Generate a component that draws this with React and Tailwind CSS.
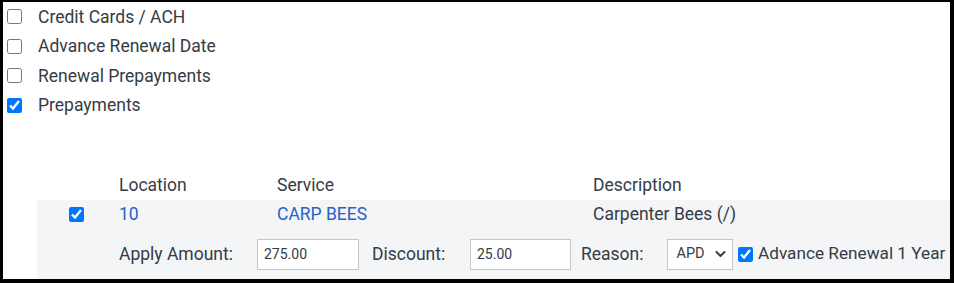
import React from 'react';

const options = [
  { label: 'Credit Cards / ACH', checked: false },
  { label: 'Advance Renewal Date', checked: false },
  { label: 'Renewal Prepayments', checked: false },
  { label: 'Prepayments', checked: true },
];

function Check({ checked }) {
  return (
    <input
      type="checkbox"
      defaultChecked={checked}
      className="m-0 h-[15px] w-[15px] shrink-0 accent-[#0075ff]"
    />
  );
}

export default function App() {
  return (
    <div
      className="h-[283px] w-[954px] overflow-hidden border-b-4 border-l-[3px] border-r-4 border-t-2 border-black bg-white text-[17.5px] text-[#353c45]"
      style={{ fontFamily: 'Roboto, "Liberation Sans", sans-serif' }}
    >
      {/* option list */}
      <div className="flex flex-col">
        {options.map(o => (
          <label key={o.label} className="flex h-[29.5px] items-center">
            <span className="flex w-[35px] justify-start pl-[4px]">
              <Check checked={o.checked} />
            </span>
            <span>{o.label}</span>
          </label>
        ))}
      </div>

      {/* prepayments table */}
      <div className="mt-[50px] pl-[34px]">
        <div className="flex h-[30px] items-center">
          <div className="w-[82px]" />
          <div className="w-[158px]">Location</div>
          <div className="w-[316px]">Service</div>
          <div>Description</div>
        </div>

        <div className="bg-[#f4f5f7]">
          <div className="flex h-[29px] items-center">
            <div className="flex w-[82px] justify-start pl-[32px]">
              <Check checked />
            </div>
            <div className="w-[158px] text-[#2563c7]">10</div>
            <div className="w-[316px] text-[#2563c7]">CARP BEES</div>
            <div>Carpenter Bees (/)</div>
          </div>

          <div className="flex h-[50px] items-center whitespace-nowrap pl-[82px]">
            <span className="w-[138px] shrink-0">Apply Amount:</span>
            <input
              defaultValue="275.00"
              className="h-[31px] w-[102px] shrink-0 border border-[#c6c6c6] bg-white px-[6px] text-[14px] text-[#353c45] outline-none"
            />
            <span className="ml-[13px] w-[98px] shrink-0">Discount:</span>
            <input
              defaultValue="25.00"
              className="h-[31px] w-[101px] shrink-0 border border-[#c6c6c6] bg-white px-[6px] text-[14px] text-[#353c45] outline-none"
            />
            <span className="ml-[10px] w-[86px] shrink-0">Reason:</span>
            <div className="flex h-[31px] w-[66px] shrink-0 items-center justify-center gap-[10px] border border-[#c6c6c6] bg-white pl-[2px] text-[14.5px]">
              <span>APD</span>
              <svg width="11" height="8" viewBox="0 0 11 8" fill="none">
                <path d="M1.5 2l4 4 4-4" stroke="#353c45" strokeWidth="2" strokeLinecap="round" strokeLinejoin="round" />
              </svg>
            </div>
            <span className="ml-[5px] flex">
              <Check checked />
            </span>
            <span className="ml-[5px] text-[17.2px]">Advance Renewal 1 Year</span>
          </div>
        </div>
      </div>
    </div>
  );
}
